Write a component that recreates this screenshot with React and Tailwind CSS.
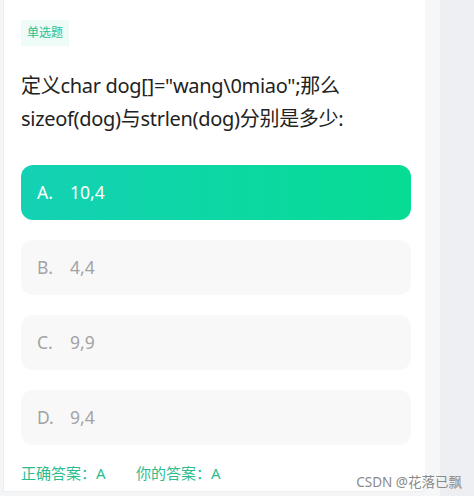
export default function App() {
  const font = { fontFamily: '"Noto Sans", "Noto Sans CJK SC", sans-serif' };
  const opts = [
    ["B.", "4,4"],
    ["C.", "9,9"],
    ["D.", "9,4"],
  ];
  return (
    <div className="relative flex w-[474px] h-[496px] overflow-hidden bg-[#f4f5f7]" style={font}>
      <div className="ml-[3px] w-[422px] h-[492px] bg-white border-l border-b border-[#eeeeee] rounded-br-[6px] flex flex-col pl-[17px] pr-[14px] pt-[20px]">
        <div className="self-start h-[26px] px-[6px] flex items-center bg-[#eefbf6] text-[#27c292] text-[12px]">单选题</div>
        <div className="mt-[23px] text-[20px] leading-[33px] text-[#222222] tracking-[-0.3px]">
          定义char dog[]="wang\0miao";那么
          <br />
          sizeof(dog)与strlen(dog)分别是多少:
        </div>
        <div className="mt-[30px] h-[55px] rounded-[12px] bg-gradient-to-r from-[#14d1b4] to-[#07dc93] flex items-center pl-[16px] text-white text-[17.5px]">
          <span className="w-[33px]">A.</span>
          <span>10,4</span>
        </div>
        {opts.map(([k, v]) => (
          <div key={k} className="mt-[20px] h-[55px] rounded-[12px] bg-[#f8f8f9] flex items-center pl-[16px] text-[#a3a3a3] text-[17.5px]">
            <span className="w-[33px]">{k}</span>
            <span>{v}</span>
          </div>
        ))}
        <div className="mt-[17px] flex text-[15px] text-[#2bbd8e]">
          <span className="w-[115px]">正确答案：A</span>
          <span>你的答案：A</span>
        </div>
      </div>
      <div className="w-[15px] h-full bg-[#f6f7f9]"></div>
      <div className="flex-1 h-full bg-[#eeeff2]"></div>
      <div className="absolute right-[12px] bottom-[4px] text-[13.5px] text-[#8a8a8a]">CSDN @花落已飘</div>
    </div>
  );
}
